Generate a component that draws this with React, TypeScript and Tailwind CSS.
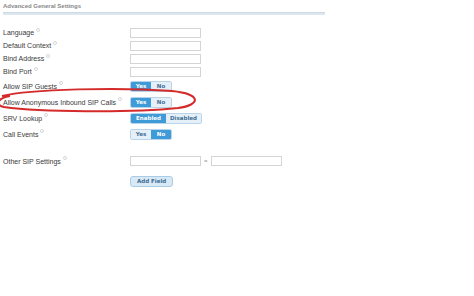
import type { ReactNode } from 'react'

function Help() {
  return <span className="inline-block w-[4px] h-[4px] rounded-full border border-[#d6d6d6] ml-[2px] -translate-y-[3px]" />
}

function Row({ label, h, children }: { label: string; h: string; children?: ReactNode }) {
  return (
    <div className={`flex items-center ${h}`}>
      <div className="w-[127px] text-[7px] leading-none text-[#3a3a3a] flex items-center whitespace-nowrap">
        <span>{label}</span>
        <Help />
      </div>
      {children}
    </div>
  )
}

function Input({ w = 'w-[71px]' }: { w?: string }) {
  return <div className={`${w} h-[10px] border border-[#d4d4d4] bg-white`} />
}

function Toggle({ a, b, active, w }: { a: string; b: string; active: 0 | 1; w: string }) {
  const seg = (t: string, on: boolean) => (
    <div
      className={`${w} h-full flex items-center justify-center font-bold text-[5.5px]
        ${on ? 'bg-[#3f9ad8] text-white' : 'bg-[#e5eff8] text-[#3d6d96]'}`}
    >
      {t}
    </div>
  )
  return (
    <div className="flex h-[11px] rounded-[2px] overflow-hidden border border-[#b9d4ea] [font-family:'DejaVu_Sans',sans-serif]">
      {seg(a, active === 0)}
      {seg(b, active === 1)}
    </div>
  )
}

export default function App() {
  return (
    <div className="relative w-[474px] h-[296px] bg-white overflow-hidden [font-family:'Liberation_Sans',Arial,sans-serif]">
      <div className="pl-[3px] pt-[2px]">
        <div className="text-[6px] leading-[8px] text-[#888] font-bold">Advanced General Settings</div>
        <div className="mt-[2px] w-[322px] h-[3px] bg-[#dde7ef] border-t border-[#cbd9e4]" />

        <div className="mt-[11px] flex flex-col">
          <Row label="Language" h="h-[13px]"><Input /></Row>
          <Row label="Default Context" h="h-[13px]"><Input /></Row>
          <Row label="Bind Address" h="h-[13px]"><Input /></Row>
          <Row label="Bind Port" h="h-[13px]"><Input /></Row>
          <Row label="Allow SIP Guests" h="h-[16px]"><Toggle a="Yes" b="No" active={0} w="w-[20px]" /></Row>
          <Row label="Allow Anonymous Inbound SIP Calls" h="h-[16px]"><Toggle a="Yes" b="No" active={0} w="w-[20px]" /></Row>
          <Row label="SRV Lookup" h="h-[16px]"><Toggle a="Enabled" b="Disabled" active={0} w="w-[35px]" /></Row>
          <Row label="Call Events" h="h-[16px]"><Toggle a="Yes" b="No" active={1} w="w-[20px]" /></Row>

          <div className="mt-[11px]">
            <Row label="Other SIP Settings" h="h-[16px]">
              <Input />
              <span className="mx-[3px] text-[6px] text-[#999]">=</span>
              <Input />
            </Row>
          </div>

          <div className="mt-[5px] flex items-center h-[15px]">
            <div className="w-[127px]" />
            <div className="h-[11px] px-[6px] flex items-center rounded-[3px] border border-[#a9cbe6] bg-[#d8e9f6] text-[#3b6a93] text-[5.5px] font-bold [font-family:'DejaVu_Sans',sans-serif]">
              Add Field
            </div>
          </div>
        </div>
      </div>

      {/* red marker circle */}
      <svg className="absolute left-0 top-0 pointer-events-none" width="474" height="296" viewBox="0 0 474 296">
        <path
          d="M2 96 C 30 89, 120 87, 172 91 C 202 94, 201 105, 178 108 C 130 113, 40 112, 4 107 C -6 105, -2 98, 10 96"
          fill="none"
          stroke="#d42a2a"
          strokeWidth="2"
        />
      </svg>
    </div>
  )
}
